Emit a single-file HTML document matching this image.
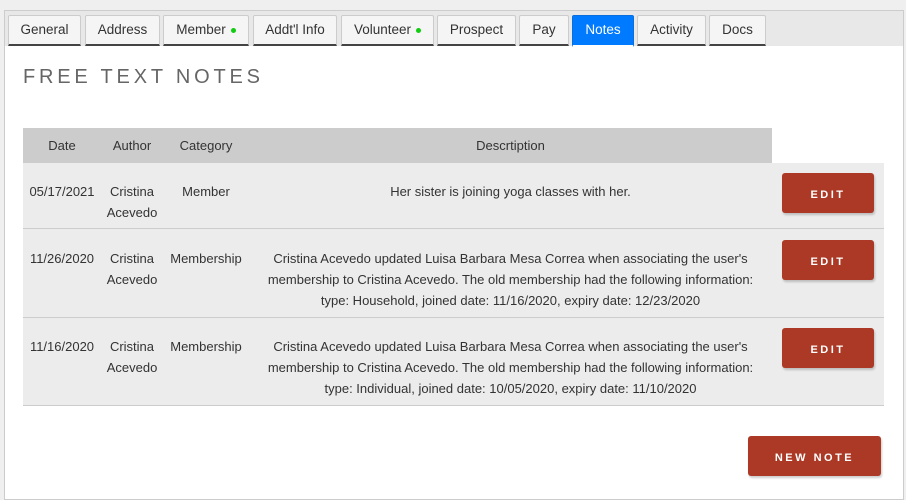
<!DOCTYPE html>
<html><head><style>
*{margin:0;padding:0;box-sizing:border-box}
body{width:906px;height:493px;background:#efefef;font-family:"Liberation Sans",Arial,sans-serif;color:#333;position:relative;overflow:hidden}
.panel{position:absolute;left:4px;top:10px;width:900px;height:490px;background:#fff;border:1px solid #ccc}
.bar{position:absolute;left:5px;top:11px;width:898px;height:35px;background:#e8e8e8}
.tab{position:absolute;top:15px;height:31px;background:#f5f5f5;border:1px solid #ccc;border-bottom:2px solid #444;border-radius:2px 2px 0 0;font-size:13.5px;line-height:28px;text-align:center;color:#333}
.tab.on{background:#007bff;color:#fff;border-color:#0a6ee0;border-bottom:2px solid #fff;height:32px}
.dot{display:inline-block;width:5px;height:5px;border-radius:50%;background:#1c1;margin-left:5px;vertical-align:1px}
h1{position:absolute;left:23px;top:66px;font-size:20px;font-weight:normal;letter-spacing:3.8px;color:#666}
.hd{position:absolute;left:23px;top:128px;width:749px;height:35px;background:#ccc}
.row{position:absolute;left:23px;width:861px;background:#ececec;border-bottom:1px solid #ccc}
.c{position:absolute;font-size:13px;line-height:21px;text-align:center}
.btn{position:absolute;background:#ab3926;color:#fff;font-size:11px;font-weight:bold;letter-spacing:2.5px;text-align:center;line-height:40px;padding-top:2px;height:40px;border-radius:3px;box-shadow:1px 2px 2px rgba(0,0,0,.2)}
</style></head><body>
<div class="panel"></div>
<div class="bar"></div>
<div class="tab" style="left:8px;width:73px">General</div>
<div class="tab" style="left:85px;width:75px">Address</div>
<div class="tab" style="left:163px;width:86px">Member<span class="dot"></span></div>
<div class="tab" style="left:253px;width:84px">Addt'l Info</div>
<div class="tab" style="left:341px;width:93px">Volunteer<span class="dot"></span></div>
<div class="tab" style="left:437px;width:79px">Prospect</div>
<div class="tab" style="left:519px;width:50px">Pay</div>
<div class="tab on" style="left:572px;width:62px">Notes</div>
<div class="tab" style="left:637px;width:69px">Activity</div>
<div class="tab" style="left:709px;width:57px">Docs</div>
<h1>FREE TEXT NOTES</h1>
<div class="hd"></div>
<div class="c" style="left:23px;width:78px;top:135px">Date</div>
<div class="c" style="left:101px;width:62px;top:135px">Author</div>
<div class="c" style="left:163px;width:86px;top:135px">Category</div>
<div class="c" style="left:249px;width:523px;top:135px">Descrtiption</div>

<div class="row" style="top:163px;height:66px"></div>
<div class="c" style="left:23px;width:78px;top:181px">05/17/2021</div>
<div class="c" style="left:101px;width:62px;top:181px">Cristina Acevedo</div>
<div class="c" style="left:163px;width:86px;top:181px">Member</div>
<div class="c" style="left:259px;width:503px;top:181px">Her sister is joining yoga classes with her.</div>
<div class="btn" style="left:782px;top:173px;width:92px">EDIT</div>

<div class="row" style="top:229px;height:89px"></div>
<div class="c" style="left:23px;width:78px;top:248px">11/26/2020</div>
<div class="c" style="left:101px;width:62px;top:248px">Cristina Acevedo</div>
<div class="c" style="left:163px;width:86px;top:248px">Membership</div>
<div class="c" style="left:259px;width:503px;top:248px">Cristina Acevedo updated Luisa Barbara Mesa Correa when associating the user's membership to Cristina Acevedo. The old membership had the following information: type: Household, joined date: 11/16/2020, expiry date: 12/23/2020</div>
<div class="btn" style="left:782px;top:240px;width:92px">EDIT</div>

<div class="row" style="top:318px;height:88px"></div>
<div class="c" style="left:23px;width:78px;top:336px">11/16/2020</div>
<div class="c" style="left:101px;width:62px;top:336px">Cristina Acevedo</div>
<div class="c" style="left:163px;width:86px;top:336px">Membership</div>
<div class="c" style="left:259px;width:503px;top:336px">Cristina Acevedo updated Luisa Barbara Mesa Correa when associating the user's membership to Cristina Acevedo. The old membership had the following information: type: Individual, joined date: 10/05/2020, expiry date: 11/10/2020</div>
<div class="btn" style="left:782px;top:328px;width:92px">EDIT</div>

<div class="btn" style="left:748px;top:436px;width:133px">NEW NOTE</div>
</body></html>
